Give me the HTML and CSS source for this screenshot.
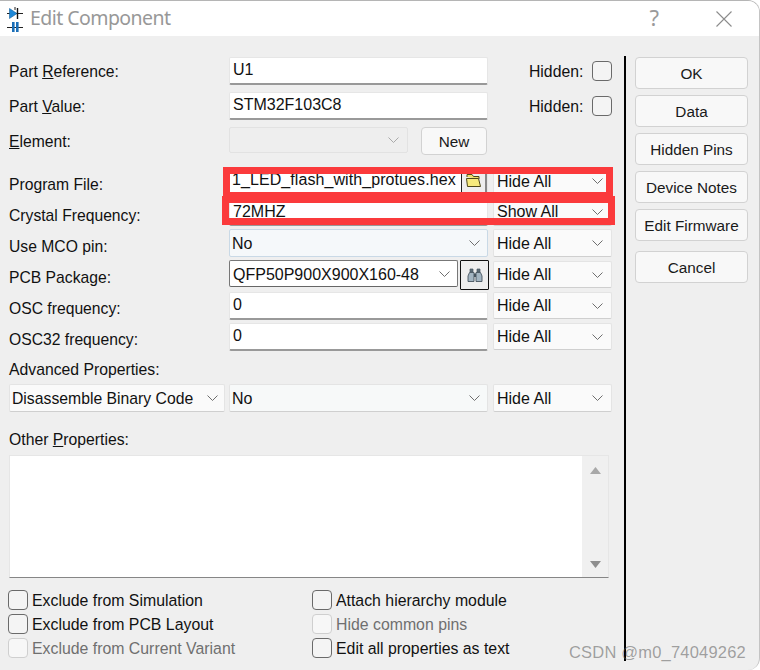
FILE: index.html
```html
<!DOCTYPE html>
<html lang="en">
<head>
<meta charset="utf-8">
<title>Edit Component</title>
<link rel="stylesheet" href="styles.css">
</head>
<body>
<svg class="defs" width="0" height="0" aria-hidden="true">
  <symbol id="chev" viewBox="0 0 11 6"><path d="M.5.5l5 5 5-5" fill="none" stroke="currentColor"/></symbol>
</svg>
<div class="window">
  <header class="titlebar">
    <svg class="appicon" viewBox="0 0 16 25" width="16" height="25">
      <path d="M0 6.500h16M0 20.500h16M8 0v3" stroke="#222" fill="none"/>
      <path d="M2.500 1.500l7.500 5-7.500 5z" fill="#1e88d8" stroke="#14609c" stroke-width=".6"/>
      <path d="M10.500 1v11" stroke="#111" stroke-width="1.4"/>
      <rect x="5" y="15" width="2.6" height="10" fill="#1b6fb8"/>
      <rect x="9" y="15" width="2.6" height="10" fill="#1b6fb8"/>
    </svg>
    <span class="title">Edit Component</span>
    <span class="help">?</span>
    <svg class="close" viewBox="0 0 16 16" width="16" height="16"><path d="M.5.5l15 15M15.500.5l-15 15" stroke="#8c8c8c" stroke-width="1.1" fill="none"/></svg>
  </header>
  <main class="body">
    <section class="left">
      <div class="row">
        <label class="lbl">Part <u>R</u>eference:</label>
        <div class="input wide">U1</div>
        <span class="hidden-lbl">Hidden:</span><span class="check"></span>
      </div>
      <div class="row mt7">
        <label class="lbl">Part <u>V</u>alue:</label>
        <div class="input wide">STM32F103C8</div>
        <span class="hidden-lbl">Hidden:</span><span class="check"></span>
      </div>
      <div class="row mt7">
        <label class="lbl"><u>E</u>lement:</label>
        <div class="select disabled element"><svg class="chev"><use href="#chev"/></svg></div>
        <button class="btn new">New</button>
      </div>
      <div class="row mt12 h27">
        <label class="lbl low">Program File:</label>
        <div class="input wide file"><span class="file-name">1_LED_flash_with_protues.hex</span>
          <span class="browse">
            <svg viewBox="0 0 15 14" width="15" height="14"><path d="M1 4V1.500h5L7.500 3.500H13V6" fill="#efe06a" stroke="#4d4718"/><path d="M.5 5.500h12l2 8H1.500z" fill="#f6ea7c" stroke="#4d4718"/></svg>
          </span>
        </div>
        <div class="select vis">Hide All<svg class="chev"><use href="#chev"/></svg></div>
      </div>
      <div class="row mt4">
        <label class="lbl low">Crystal Frequency:</label>
        <div class="input wide crystal">72MHZ</div>
        <div class="select vis flat">Show All<svg class="chev"><use href="#chev"/></svg></div>
      </div>
      <div class="row mt3">
        <label class="lbl low">Use MCO pin:</label>
        <div class="select focus wide">No<svg class="chev"><use href="#chev"/></svg></div>
        <div class="select vis">Hide All<svg class="chev"><use href="#chev"/></svg></div>
      </div>
      <div class="row mt3">
        <label class="lbl low">PCB Package:</label>
        <div class="select pcb">QFP50P900X900X160-48<svg class="chev"><use href="#chev"/></svg></div>
        <span class="find">
          <svg viewBox="0 0 16 14" width="16" height="14"><path d="M3 1h3v3H3zM10 1h3v3h-3z" fill="#5d6d79" stroke="#46545f" stroke-width=".7"/><path d="M2.500 4.500h4.500v9H1V8zM9 4.500h4.500L15 8v5.500H9z" fill="#a3b5c2" stroke="#46545f" stroke-width=".9"/><path d="M7 5.500h2V9H7z" fill="#46545f"/></svg>
        </span>
        <div class="select vis s27 nudge">Hide All<svg class="chev"><use href="#chev"/></svg></div>
      </div>
      <div class="row mt4">
        <label class="lbl low2">OSC frequency:</label>
        <div class="input wide">0</div>
        <div class="select vis s27">Hide All<svg class="chev"><use href="#chev"/></svg></div>
      </div>
      <div class="row mt3">
        <label class="lbl low2">OSC32 frequency:</label>
        <div class="input wide">0</div>
        <div class="select vis s27">Hide All<svg class="chev"><use href="#chev"/></svg></div>
      </div>
      <div class="caption adv">Advanced Properties:</div>
      <div class="row mt7">
        <div class="select disasm">Disassemble Binary Code<svg class="chev"><use href="#chev"/></svg></div>
        <div class="select wide plain">No<svg class="chev"><use href="#chev"/></svg></div>
        <div class="select vis">Hide All<svg class="chev"><use href="#chev"/></svg></div>
      </div>
      <div class="caption other">Other <u>P</u>roperties:</div>
      <div class="textarea">
        <div class="scroll">
          <svg viewBox="0 0 11 7" width="11" height="7"><path d="M5.500 0L11 7H0z" fill="#a8a8a8"/></svg>
          <svg viewBox="0 0 11 7" width="11" height="7"><path d="M0 0h11L5.500 7z" fill="#8e8e8e"/></svg>
        </div>
      </div>
      <div class="options">
        <div class="opt"><span class="check"></span>Exclude from Simulation</div>
        <div class="opt"><span class="check"></span>Attach hierarchy module</div>
        <div class="opt"><span class="check"></span>Exclude from PCB Layout</div>
        <div class="opt off"><span class="check"></span>Hide common pins</div>
        <div class="opt off"><span class="check"></span>Exclude from Current Variant</div>
        <div class="opt"><span class="check"></span>Edit all properties as text</div>
      </div>
    </section>
    <div class="divider"></div>
    <aside class="actions">
      <button class="btn">OK</button>
      <button class="btn">Data</button>
      <button class="btn">Hidden Pins</button>
      <button class="btn">Device Notes</button>
      <button class="btn">Edit Firmware</button>
      <button class="btn cancel">Cancel</button>
    </aside>
  </main>
  <div class="mark m1"></div>
  <div class="mark m2"></div>
  <div class="watermark">CSDN @m0_74049262</div>
</div>
</body>
</html>
```
FILE: styles.css
```css
* { box-sizing: border-box; }
html, body { margin: 0; padding: 0; background: #fff; }
.defs { position: absolute; }
body { width: 760px; height: 670px; overflow: hidden; font-family: "Liberation Sans", Arial, sans-serif; font-size: 16px; color: #111; }
.window { position: relative; width: 760px; height: 670px; background: #efefef; border-top: 1px solid #b5b5b5; border-right: 1px solid #c4c4c4; border-radius: 0 12px 12px 0; overflow: hidden; }
.titlebar { display: flex; align-items: center; height: 35px; background: #fff; padding-left: 7px; }
.appicon { flex: none; margin-top: 1px; }
.title { margin: -3px 0 0 7px; font-family: "Noto Sans", sans-serif; font-size: 19.5px; letter-spacing: -.55px; color: #989898; }
.help { margin: -3px 0 0 auto; font-family: "Noto Sans", sans-serif; font-size: 22px; color: #9a9a9a; }
.close { margin: 1px 27px 0 57px; }
.body { display: flex; height: 634px; }
.left { width: 624px; padding-top: 21px; display: flex; flex-direction: column; flex: none; }
.row { display: flex; align-items: center; height: 28px; flex: none; }
.h27 { height: 27px; }
.mt3 { margin-top: 3px; }
.mt4 { margin-top: 4px; }
.mt7 { margin-top: 7px; }
.mt12 { margin-top: 12px; }
.lbl { width: 220px; margin-left: 9px; flex: none; font-size: 15.7px; padding-top: 2px; }
.lbl.low { padding-top: 8px; }
.lbl.low2 { padding-top: 6px; }
.input { height: 100%; background: #fff; border: 1px solid #e6e6e6; border-bottom: 2px solid #999; border-radius: 2px; padding: 0 0 2px 3px; display: flex; align-items: center; }
.wide { width: 259px; flex: none; }
.hidden-lbl { margin-left: 41px; width: 63px; padding-top: 2px; font-size: 15.75px; }
.check { width: 20px; height: 20px; flex: none; display: block; background: #f4f4f4; border: 1px solid #6a6a6a; border-radius: 4px; }
.select { position: relative; height: 100%; display: flex; align-items: center; background: #fafafa; border: 1px solid #e4e4e4; border-bottom-color: #cfcfcf; border-radius: 2px; padding: 2px 0 0 3px; }
.chev { position: absolute; right: 8px; top: 50%; width: 11px; height: 6px; margin-top: -3px; color: #6e6e6e; }
.wide .chev, .pcb .chev { right: 7px; }
.vis { width: 119px; margin-left: 5px; flex: none; }
.s27 { height: 27px; align-self: flex-start; padding-top: 0; }
.nudge { margin-top: 1px; }
.flat { padding-top: 0; }
.disabled { background: #eee; border-color: #e2e2e2; }
.disabled .chev { color: #a9a9a9; }
.element { width: 179px; height: 26px; align-self: flex-start; flex: none; }
.btn { display: block; font: 15.3px "Liberation Sans", Arial, sans-serif; color: #1a1a1a; background: #f8f8f8; border: 1px solid #d2d2d2; border-radius: 4px; padding: 2px 0 0; height: 32px; width: 113px; }
.new { width: 66px; height: 28px; margin-left: 13px; }
.file { position: relative; padding-bottom: 0; padding-left: 2px; }
.crystal { padding-bottom: 0; }
.file-name { letter-spacing: .08px; white-space: nowrap; }
.browse { position: absolute; left: 231px; right: 0; top: 0; bottom: 0; display: flex; align-items: center; justify-content: center; background: #eee; border-left: 1px solid #222; border-right: 2px solid #888; }
.focus { background: #f5f8fa; border-color: #c9d9e6; padding-left: 2px; }
.plain { padding-left: 2px; background: #f7f9f9; }
.pcb { width: 229px; height: 27px; flex: none; align-self: flex-start; background: #fff; border-color: #777; border-bottom-color: #666; }
.find { width: 29px; height: 30px; margin-left: 2px; margin-right: -1px; align-self: flex-start; flex: none; display: flex; align-items: center; justify-content: center; background: #eee; border: 1px solid #111; border-radius: 1px; }
.caption { height: 16px; line-height: 18px; margin-left: 9px; flex: none; font-size: 15.75px; }
.adv { margin-top: 10px; }
.other { margin-top: 19px; }
.disasm { width: 216px; margin: 0 4px 0 9px; flex: none; padding-left: 2px; font-size: 15.75px; }
.disasm .chev { right: 6px; }
.textarea { display: flex; justify-content: flex-end; width: 600px; height: 123px; margin: 8px 0 0 9px; flex: none; background: #fff; border: 1px solid #e6e6e6; border-bottom: 1px solid #868686; }
.scroll { width: 26px; background: #f0f0f0; display: flex; flex-direction: column; align-items: center; justify-content: space-between; padding: 11px 0 9px; }
.options { display: grid; grid-template-columns: 304px 1fr; grid-auto-rows: 20px; row-gap: 4px; margin: 12px 0 0 8px; }
.opt { display: flex; align-items: flex-start; line-height: 22px; gap: 4px; font-size: 15.85px; }
.opt.off { color: #6f6f6f; }
.opt.off .check { background: #f7f7f7; border-color: #cfcfcf; }
.divider { width: 2px; height: 605px; margin-top: 20px; background: #000; flex: none; }
.actions { display: flex; flex-direction: column; gap: 6px; margin: 21px 0 0 9px; flex: none; }
.cancel { margin-top: 4px; }
.mark { position: absolute; border: solid #fb3a3c; background: transparent; z-index: 2; }
.m1 { left: 223px; top: 166px; width: 390px; height: 32px; border-width: 7px; }
.m2 { left: 222px; top: 195px; width: 393px; height: 29px; border-width: 7px; }
.watermark { position: absolute; left: 569px; top: 642px; z-index: 3; font-size: 16.5px; letter-spacing: .2px; color: rgba(90,90,90,.55); white-space: nowrap; }
```
